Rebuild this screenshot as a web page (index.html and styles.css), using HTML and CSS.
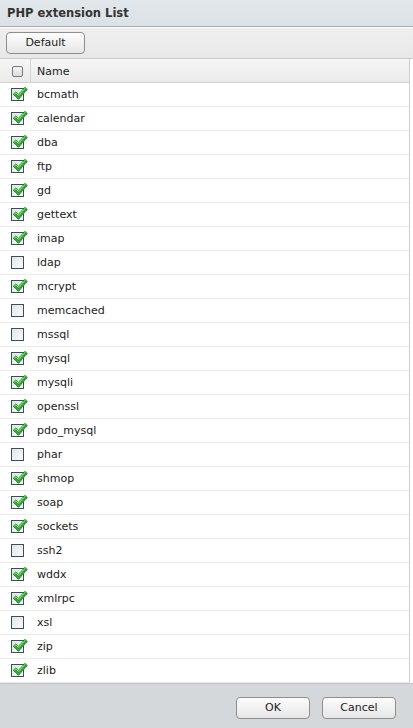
FILE: index.html
```html
<!DOCTYPE html>
<html>
<head>
<meta charset="utf-8">
<link rel="stylesheet" href="styles.css">
</head>
<body>
<div class="win">
  <div class="title">PHP extension List</div>
  <div class="toolbar"><button class="btn btn-default">Default</button></div>
  <div class="grid">
    <div class="head">
      <div class="cell-chk"><span class="box head-box"></span></div>
      <div class="cell-name">Name</div>
    </div>
    <div class="rows" id="rows"></div>
  </div>
  <div class="footer">
    <button class="btn btn-foot">OK</button>
    <button class="btn btn-foot">Cancel</button>
  </div>
</div>
<script src="app.js"></script>
</body>
</html>
```
FILE: app.js
```js
var items = [
  ["bcmath",1],["calendar",1],["dba",1],["ftp",1],["gd",1],["gettext",1],["imap",1],
  ["ldap",0],["mcrypt",1],["memcached",0],["mssql",0],["mysql",1],["mysqli",1],
  ["openssl",1],["pdo_mysql",1],["phar",0],["shmop",1],["soap",1],["sockets",1],
  ["ssh2",0],["wddx",1],["xmlrpc",1],["xsl",0],["zip",1],["zlib",1]
];
var check = '<svg class="tick" viewBox="0 0 16 15" width="16" height="15"><path d="M1.2 8.2 L4 5.8 L6.4 8.4 L13 1.2 L15.4 3.6 L6.4 13.4 Z" fill="#33a833" stroke="#1f7d1f" stroke-width="0.7" stroke-linejoin="round"/><path d="M2.4 8.1 L4 6.8 L6.4 9.4 L13 2.3" fill="none" stroke="#9be69b" stroke-width="0.9"/></svg>';
var html = "";
items.forEach(function (it) {
  html += '<div class="row"><div class="cell-chk"><span class="box' + (it[1] ? ' on' : '') + '">' + (it[1] ? check : '') + '</span></div><div class="cell-name">' + it[0] + '</div></div>';
});
document.getElementById("rows").innerHTML = html;
```
FILE: styles.css
```css
* { box-sizing: border-box; }
html, body { margin: 0; padding: 0; }
body { width: 413px; height: 728px; overflow: hidden; font-family: "DejaVu Sans", Verdana, sans-serif; font-size: 11px; color: #222; }
.win { display: flex; flex-direction: column; height: 728px; background: #fff; }
.title { height: 27px; padding: 6px 0 0 7px; background: linear-gradient(#e2e7eb, #dbe1e5); border-bottom: 1px solid #a9acae; font-weight: bold; font-size: 11.5px; color: #333; }
.toolbar { height: 32px; padding: 4px 0 0 6px; background: linear-gradient(#efefef, #e8e8e8); border-top: 1px solid #fdfdfd; border-bottom: 1px solid #c9c9c9; }
.btn { font-family: "DejaVu Sans", Verdana, sans-serif; font-size: 11px; color: #222; border: 1px solid #8e8e8e; border-radius: 4px; background: linear-gradient(#fdfdfd, #e6e6e6); padding: 0; margin: 0; }
.btn-default { width: 79px; height: 22px; }
.grid { flex: 1; display: flex; flex-direction: column; border-right: 1px solid #cfcfcf; margin-right: 3px; background: #fff; }
.head { display: flex; height: 24px; background: linear-gradient(#f6f6f6, #ebebeb); border-bottom: 1px solid #cfcfcf; }
.head .cell-chk { border-right: 1px solid #d4d4d4; padding-top: 3px; }
.head .cell-name { padding-top: 3px; }
.cell-chk { width: 31px; display: flex; align-items: center; justify-content: center; }
.cell-name { flex: 1; display: flex; align-items: center; padding-left: 6px; }
.rows { display: flex; flex-direction: column; }
.row { display: flex; height: 24px; border-bottom: 1px solid #ececec; }
.box { position: relative; width: 13px; height: 13px; border: 1px solid #35505e; background: linear-gradient(135deg, #e4e4e4, #fafafa); margin-left: 4px; }
.head-box { width: 11px; height: 11px; border: 1px solid #6f7a80; border-radius: 2px; background: linear-gradient(#f4f4f4, #dedede); margin-left: 5px; }
.tick { position: absolute; left: 0; top: -3px; }
.footer { height: 46px; display: flex; justify-content: flex-end; align-items: center; gap: 12px; padding: 0 17px 0 0; background: #d5d8da; border-top: 1px solid #c2c4c6; }
.btn-foot { width: 74px; height: 22px; margin-top: 4px; }
```
